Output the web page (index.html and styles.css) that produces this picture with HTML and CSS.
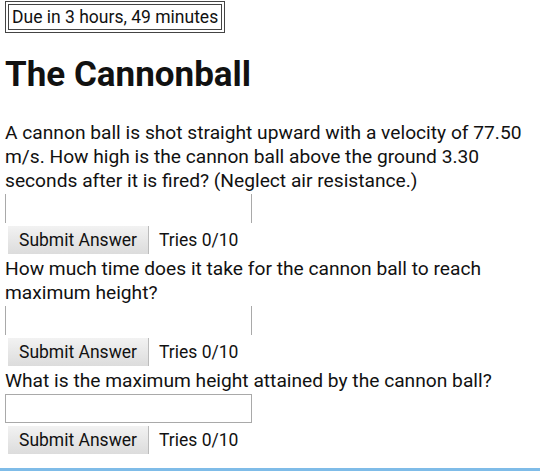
FILE: index.html
```html
<!DOCTYPE html>
<html lang="en">
<head>
  <meta charset="UTF-8">
  <meta name="viewport" content="width=device-width, initial-scale=1.0">
  <title>The Cannonball</title>
  <link rel="stylesheet" href="styles.css">
</head>
<body>
  <!-- Due date -->
  <div class="due">Due in 3 hours, 49 minutes</div>

  <h1 class="title">The Cannonball</h1>

  <!-- Question 1 -->
  <div class="question">
    <p class="prompt">A cannon ball is shot straight upward with a velocity of 77.50 m/s. How high is the cannon ball above the ground 3.30 seconds after it is fired? (Neglect air resistance.)</p>
    <input type="text" class="answer">
    <div class="actions">
      <button class="submit">Submit Answer</button>
      <span class="tries">Tries 0/10</span>
    </div>
  </div>

  <!-- Question 2 -->
  <div class="question">
    <p class="prompt">How much time does it take for the cannon ball to reach maximum height?</p>
    <input type="text" class="answer">
    <div class="actions">
      <button class="submit">Submit Answer</button>
      <span class="tries">Tries 0/10</span>
    </div>
  </div>

  <!-- Question 3 -->
  <div class="question">
    <p class="prompt">What is the maximum height attained by the cannon ball?</p>
    <input type="text" class="answer answer-boxed">
    <div class="actions">
      <button class="submit">Submit Answer</button>
      <span class="tries">Tries 0/10</span>
    </div>
  </div>

  <hr class="divider">
</body>
</html>
```

FILE: styles.css
```css
* {
  box-sizing: border-box;
}

body {
  margin: 0;
  padding: 1px 5px 0;
  font-family: 'Roboto', 'Liberation Sans', sans-serif;
  font-size: 19.2px;
  line-height: 24px;
  color: #111;
  background: white;
}

.due {
  display: inline-block;
  border: 4px double #444;
  padding: 0 3px;
  font-size: 17.5px;
  line-height: 24px;
}

.title {
  margin: 21px 0 25px;
  font-size: 35px;
  line-height: 42px;
  font-weight: 700;
}

.prompt {
  margin: 0;
}

.answer {
  display: block;
  width: 247px;
  height: 29px;
  margin: 1px 0 0;
  border: none;
  border-left: 1px solid #a9a9a9;
  border-right: 1px solid #a9a9a9;
  font-family: inherit;
  font-size: 18px;
}

.answer-boxed {
  border: 1px solid #a9a9a9;
}

.actions {
  display: flex;
  align-items: center;
  gap: 10px;
  margin: 3px 0 3px 3px;
}

.submit {
  height: 28px;
  padding: 0 11px;
  border: none;
  border-right: 1px solid #bbb;
  background: linear-gradient(to bottom, #f2f2f2, #dcdcdc);
  font-family: inherit;
  font-size: 17.5px;
  color: #111;
}

.tries {
  font-size: 17.5px;
}

.divider {
  margin: 14px -5px 0;
  border: none;
  border-top: 3px solid #7fbce8;
}
```
